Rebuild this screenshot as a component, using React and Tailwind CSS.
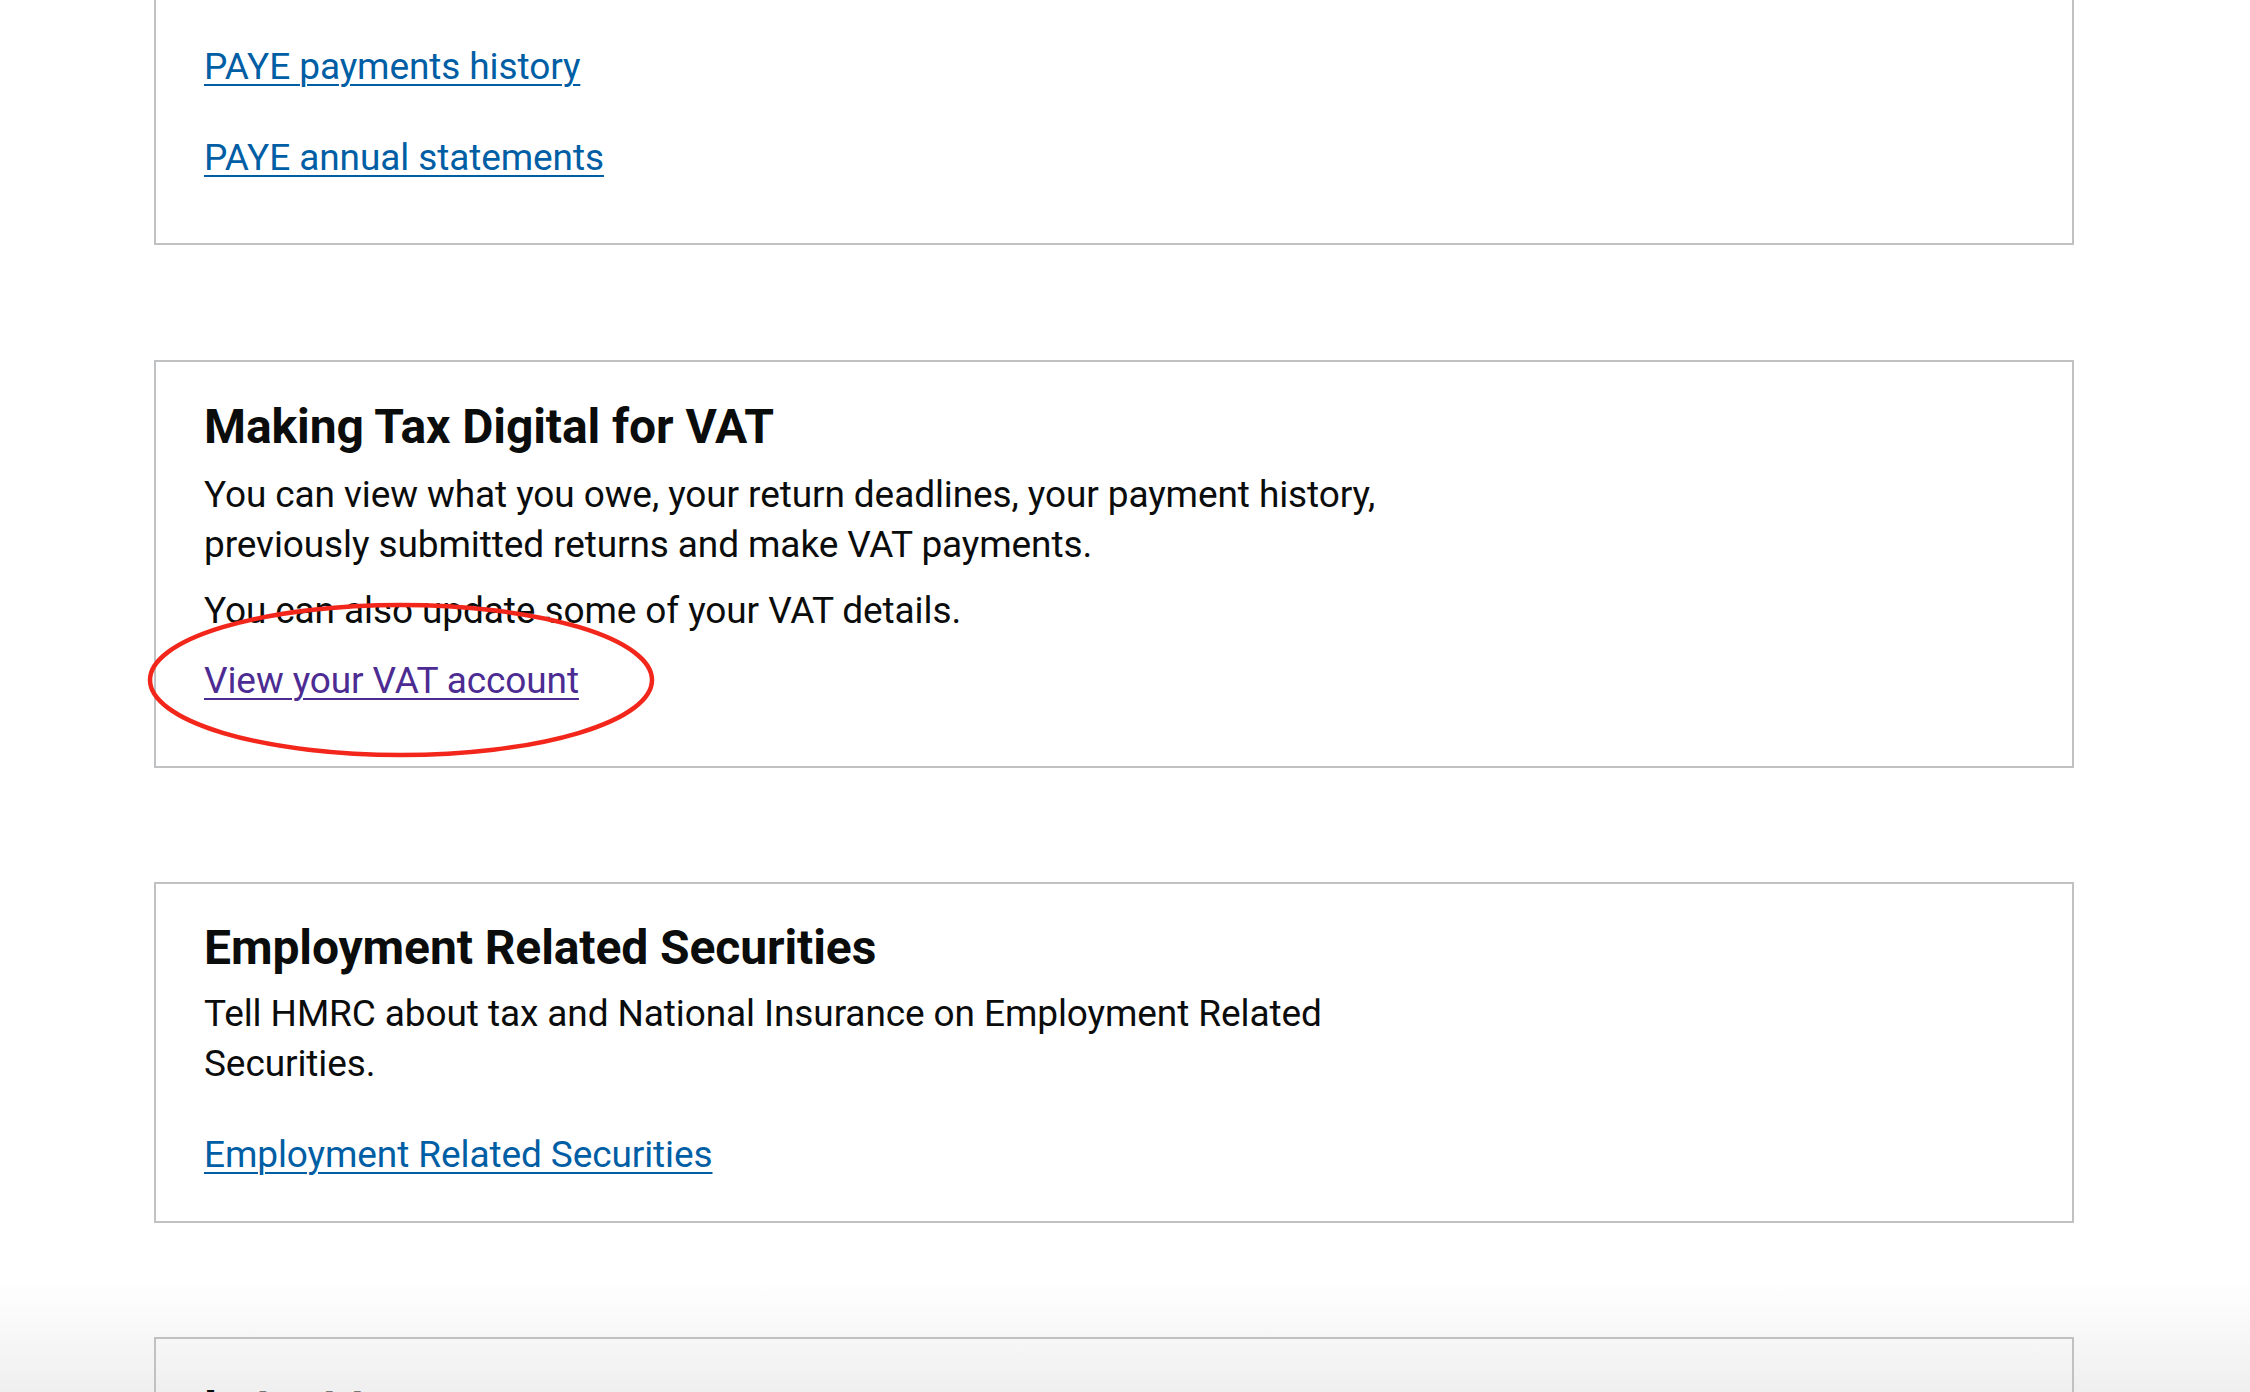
import React from "react";

const font = { fontFamily: "Roboto, 'Liberation Sans', Arial, sans-serif" };

function Box({ children, className = "" }) {
  return (
    <section
      className={
        "relative w-[1920px] ml-[154px] border-2 border-[#bfc1c3] px-[48px] " +
        className
      }
    >
      {children}
    </section>
  );
}

const linkBase =
  "block w-fit underline decoration-[2px] underline-offset-[5px] text-[37px] leading-[50px] tracking-[-0.1px]";
const linkCls = linkBase + " text-[#005ea5]";
const visitedCls = linkBase + " text-[#4c2c92]";
const headCls =
  "font-bold text-[#0b0c0c] text-[48px] leading-[60px] tracking-[-0.1px]";
const bodyCls = "text-[#0b0c0c] text-[37px] leading-[50px] tracking-[-0.1px]";

export default function App() {
  return (
    <div
      className="relative h-[1392px] w-[2250px] overflow-hidden bg-linear-to-b from-white from-[92%] to-[#efefef]"
      style={font}
    >
      <Box className="-mt-[100px] pt-[140px] pb-[60px]">
        <a href="#" className={linkCls}>
          PAYE payments history
        </a>
        <a href="#" className={linkCls + " mt-[41px]"}>
          PAYE annual statements
        </a>
      </Box>

      <Box className="mt-[115px] pt-[35px] pb-[60px]">
        <h2 className={headCls}>Making Tax Digital for VAT</h2>
        <p className={bodyCls + " mt-[13px]"}>
          You can view what you owe, your return deadlines, your payment history,
          <br />
          previously submitted returns and make VAT payments.
        </p>
        <p className={bodyCls + " mt-[16px]"}>
          You can also update some of your VAT details.
        </p>
        <a href="#" className={visitedCls + " mt-[20px]"}>
          View your VAT account
        </a>
        <svg
          className="absolute left-[-12px] top-[236px] pointer-events-none"
          width="516"
          height="164"
          viewBox="0 0 516 164"
        >
          <ellipse
            cx="257"
            cy="82"
            rx="251"
            ry="75"
            fill="none"
            stroke="#f3261b"
            strokeWidth="4.5"
          />
        </svg>
      </Box>

      <Box className="mt-[114px] pt-[34px] pb-[41px]">
        <h2 className={headCls}>Employment Related Securities</h2>
        <p className={bodyCls + " mt-[11px]"}>
          Tell HMRC about tax and National Insurance on Employment Related
          <br />
          Securities.
        </p>
        <a href="#" className={linkCls + " mt-[41px]"}>
          Employment Related Securities
        </a>
      </Box>

      <Box className="mt-[114px] pt-[39px] pb-[40px]">
        <h2 className={headCls}>Latest tax year summary</h2>
      </Box>
    </div>
  );
}
